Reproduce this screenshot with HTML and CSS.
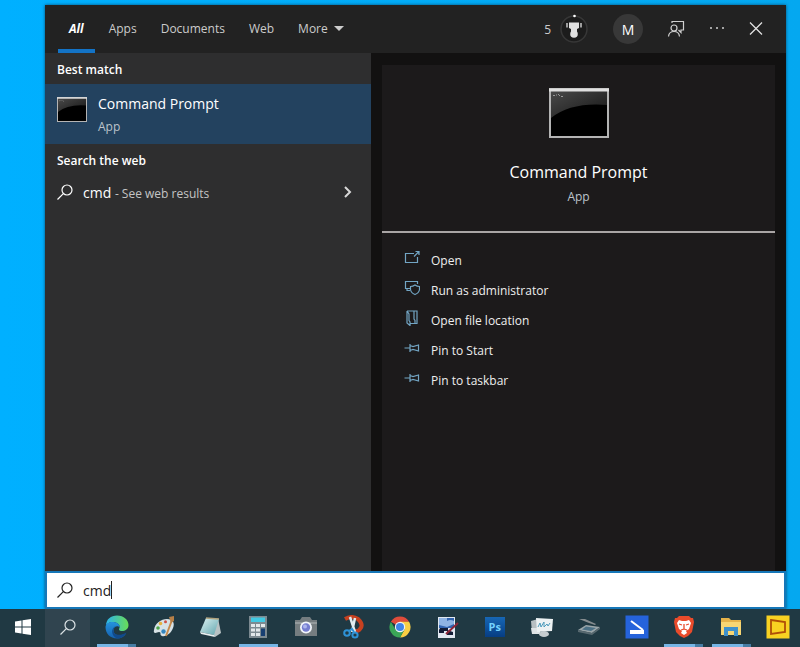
FILE: index.html
```html
<!DOCTYPE html>
<html lang="en">
<head>
  <meta charset="UTF-8" />
  <meta name="viewport" content="width=device-width, initial-scale=1" />
  <title>Search</title>
  <link rel="stylesheet" href="styles.css">
</head>
<body>
  <!-- shared shapes -->
  <svg class="defs" width="0" height="0" aria-hidden="true">
    <defs>
      <linearGradient id="gloss" x1="0" y1="0" x2="1" y2="1">
        <stop offset="0" stop-color="#4a4a4a" />
        <stop offset="1" stop-color="#151515" />
      </linearGradient>
      <symbol id="cmd" viewBox="0 0 60 50">
        <rect x="1" y="1" width="58" height="48" fill="#000" stroke="#b4b4b4" stroke-width="2" />
        <path d="M2 3H58V17Q22 14 2 30Z" fill="url(#gloss)" />
        <path d="M0 2H60" stroke="#e0e0e0" stroke-width="3" />
        <path d="M4 7.500h2M7 7h1M9 6l2 2M12 8.500h2" stroke="#999" />
      </symbol>
      <symbol id="lens" viewBox="0 0 16 16">
        <circle cx="10" cy="6" r="5" fill="none" stroke="currentColor" stroke-width="1.200" />
        <path d="M6.300 9.700L0.500 15.500" stroke="currentColor" stroke-width="1.200" />
      </symbol>
      <symbol id="pin" viewBox="0 0 16 16">
        <path d="M0.500 8H6M6 4V12M6 5.500L9 6.500 14.500 5V11L9 9.500 6 10.500M14.500 4.500V11.500" fill="none" stroke="currentColor" stroke-width="1.200" />
      </symbol>
    </defs>
  </svg>

  <main class="desktop">
    <section class="search-window">
      <header class="topbar">
        <nav class="tabs">
          <a href="#" class="tab active">All</a>
          <a href="#" class="tab">Apps</a>
          <a href="#" class="tab">Documents</a>
          <a href="#" class="tab">Web</a>
          <a href="#" class="tab">More <span class="caret"></span></a>
        </nav>
        <div class="tools">
          <button class="rewards" aria-label="Rewards, 5 points">5
            <svg width="30" height="30" viewBox="0 0 30 30">
              <circle cx="15" cy="15" r="13" fill="#1c1c1c" stroke="#373737" stroke-width="1.500" />
              <circle cx="15.500" cy="2" r="1.300" fill="#fff" />
              <path d="M10 8.500H20V14L18 15V18H12V15L10 14Z" fill="#e0e0e0" />
              <path d="M8 9V13.500M22 9V13.500" stroke="#c8c8c8" stroke-width="1.500" />
              <circle cx="15" cy="20" r="3.800" fill="#e0e0e0" />
            </svg>
          </button>
          <button class="avatar">M</button>
          <button class="tool" aria-label="Feedback">
            <svg width="18" height="18" viewBox="0 0 18 18" fill="none" stroke="#d0d0d0" stroke-width="1.200">
              <path d="M5 3V1.500H16.500V10H14V12.500L11.500 10" />
              <circle cx="7" cy="8" r="3" />
              <path d="M1.500 16.500Q2 11.500 7 11.500T12.500 16.500" />
            </svg>
          </button>
          <button class="tool" aria-label="Options">
            <svg width="16" height="16" viewBox="0 0 16 16" fill="#d0d0d0">
              <circle cx="2" cy="7" r="1" /><circle cx="8" cy="7" r="1" /><circle cx="14" cy="7" r="1" />
            </svg>
          </button>
          <button class="tool" aria-label="Close">
            <svg width="14" height="14" viewBox="0 0 14 14" stroke="#e0e0e0" stroke-width="1.300">
              <path d="M1 0.500L13 12.500M13 0.500L1 12.500" />
            </svg>
          </button>
        </div>
      </header>

      <div class="content">
        <div class="results">
          <h2 class="group">Best match</h2>
          <a href="#" class="best">
            <svg class="best-icon" width="30" height="25"><use href="#cmd" /></svg>
            <span class="best-text">
              <span class="best-name">Command Prompt</span>
              <span class="kind">App</span>
            </span>
          </a>
          <h2 class="group">Search the web</h2>
          <a href="#" class="web">
            <svg width="16" height="16"><use href="#lens" /></svg>
            <span class="web-text">cmd <small>- See web results</small></span>
            <svg width="8" height="12" viewBox="0 0 8 12" fill="none" stroke="#d8d8d8" stroke-width="2">
              <path d="M1 1L6 6L1 11" />
            </svg>
          </a>
        </div>

        <div class="preview">
          <div class="card">
            <div class="hero">
              <svg width="60" height="50"><use href="#cmd" /></svg>
              <h1 class="hero-name">Command Prompt</h1>
              <span class="kind">App</span>
            </div>
            <ul class="actions">
              <li><button class="action">
                <svg width="16" height="16" viewBox="0 0 16 16" fill="none" stroke="currentColor" stroke-width="1.200">
                  <path d="M10 3.500H1.500V12.500H13.500V7M10 6.500L15 1.500M11.500 1.500H15V5" />
                </svg>Open</button></li>
              <li><button class="action">
                <svg width="16" height="16" viewBox="0 0 16 16" fill="none" stroke="currentColor" stroke-width="1.200">
                  <path d="M6 8.500H1.500V1.500H13.500V4M3 8.500V10.500H6M11 5Q13 6.500 15.500 6.500V9.500Q15 13 11 14.500Q7 13 6.500 9.500V6.500Q9 6.500 11 5Z" />
                </svg>Run as administrator</button></li>
              <li><button class="action">
                <svg width="16" height="16" viewBox="0 0 16 16" fill="none" stroke="currentColor" stroke-width="1.200">
                  <path d="M3 1H13V13.500H6M3 1V13L6 15.500V12L5 10.500V4L3 1M10 1V9L11 10.500V13.500" />
                </svg>Open file location</button></li>
              <li><button class="action"><svg width="16" height="16"><use href="#pin" /></svg>Pin to Start</button></li>
              <li><button class="action"><svg width="16" height="16"><use href="#pin" /></svg>Pin to taskbar</button></li>
            </ul>
          </div>
        </div>
      </div>

      <label class="searchbox">
        <svg width="16" height="16"><use href="#lens" /></svg>
        <input type="text" value="cmd" aria-label="Type here to search">
        <span class="cursor"></span>
      </label>
    </section>
  </main>

  <footer class="taskbar">
    <button class="task start" aria-label="Start">
      <svg width="16" height="16" viewBox="0 0 16 16" fill="#fff">
        <path d="M0 2.500L6.500 1.500V7.500H0ZM7.500 1.300L16 0V7.500H7.500ZM0 8.500H6.500V14.500L0 13.500ZM7.500 8.500H16V16L7.500 14.700Z" />
      </svg>
    </button>
    <button class="task find" aria-label="Search"><svg width="16" height="16"><use href="#lens" /></svg></button>
    <div class="apps">
      <button class="task open stacked" aria-label="Edge">
        <svg width="24" height="24" viewBox="0 0 24 24">
          <defs>
            <linearGradient id="edge-top"><stop offset="0" stop-color="#2bb3ec" /><stop offset="1" stop-color="#69dc55" /></linearGradient>
            <linearGradient id="edge-low" x2="0" y2="1"><stop offset="0" stop-color="#2493dd" /><stop offset="1" stop-color="#1560ae" /></linearGradient>
          </defs>
          <path d="M1 11C1 4 6 0.500 12 0.500C19 0.500 23.500 5 23.500 10C23.500 14 20 16 17 16C14 16 13.500 14.500 14.500 13C15.500 9 11 6.500 7 7C3.500 7.500 1.500 9 1 11Z" fill="url(#edge-top)" />
          <path d="M0.500 12C1 8 5 6.500 8.500 7C13 7.500 15 10 14.500 12.500C13 10 8.500 11.500 8.500 15.500C8.500 20 14 22 21 18.500C19 22 16 23.500 12 23.500C5 23.500 0.500 18.500 0.500 12Z" fill="url(#edge-low)" />
          <path d="M8.500 15.500C8.500 20 15 21.500 21.500 17.500C19 22 15 23.800 12 23.500C6 21 5.500 13 11 11C9 12 8.500 14 8.500 15.500Z" fill="#114a8b" />
        </svg>
      </button>
      <button class="task" aria-label="Paint">
        <svg width="24" height="24" viewBox="0 0 24 24">
          <path d="M2 15C3 8 9 4 15 4C21 4 23 8 21 13C19 19 13 22 10 21C7 20 10 17 7 17C4 18 1 19 2 15Z" fill="#d7e2e6" />
          <circle cx="6" cy="13" r="1.800" fill="#4ea549" /><circle cx="8.500" cy="8.500" r="1.800" fill="#e5b13e" />
          <circle cx="13.500" cy="6.800" r="1.500" fill="#cf5146" /><circle cx="11.500" cy="16.500" r="2.200" fill="#3385be" />
          <path d="M20 5L14 21" stroke="#c58a4c" stroke-width="2" /><path d="M17 2L22 1L22 6L19 8Z" fill="#b78048" />
        </svg>
      </button>
      <button class="task" aria-label="Notepad">
        <svg width="24" height="24" viewBox="0 0 24 24">
          <defs><linearGradient id="note" x2="1" y2="1"><stop offset="0" stop-color="#dff4f4" /><stop offset="1" stop-color="#5fa4ad" /></linearGradient></defs>
          <path d="M19 3L22 18L16 22L14 19Z" fill="#b7c2c4" />
          <path d="M7 3L20 4L15 20L1 17Z" fill="url(#note)" /><path d="M1 17L15 20L16 22L2 19Z" fill="#e8eff0" />
          <path d="M7 3L20 4" stroke="#b0a27d" stroke-width="1.500" />
        </svg>
      </button>
      <button class="task open" aria-label="Calculator">
        <svg width="24" height="24" viewBox="0 0 24 24">
          <rect x="3" y="1" width="18" height="22" fill="#7c8a91" /><rect x="5" y="2.500" width="14" height="4.500" fill="#41c9e2" />
          <path d="M5 9h4v3H5zM10 9h4v3h-4zM15 9h4v3h-4zM5 13.500h4v3H5zM10 13.500h4v3h-4zM5 18h4v3H5zM10 18h4v3h-4z" fill="#e2e8ea" />
          <path d="M15 13.500h4V21h-4z" fill="#173f71" />
        </svg>
      </button>
      <button class="task" aria-label="Camera">
        <svg width="24" height="24" viewBox="0 0 24 24">
          <path d="M1 5H6L8 2H16L18 5H23V21H1Z" fill="#757d80" /><path d="M1 7H23V9H1Z" fill="#949b9d" />
          <circle cx="12" cy="12.500" r="6" fill="#f1f5fa" /><circle cx="12" cy="12.500" r="4.200" fill="#757ed0" /><circle cx="11" cy="11.500" r="2" fill="#acb5ed" />
        </svg>
      </button>
      <button class="task" aria-label="Snipping tool">
        <svg width="24" height="24" viewBox="0 0 24 24" fill="none">
          <path d="M4 4Q11 0 17 4Q23 10 19 14Q17 17 13 16" stroke="#c74120" stroke-width="4" />
          <path d="M9 2L14 17M14 3L11 17" stroke="#e3edf0" stroke-width="2.500" />
          <circle cx="6" cy="18" r="2.800" stroke="#2e92d6" stroke-width="2" /><circle cx="14" cy="20" r="2.600" stroke="#2e92d6" stroke-width="2" />
          <path d="M8 16L11 14L13 17" stroke="#2e92d6" stroke-width="2" />
        </svg>
      </button>
      <button class="task" aria-label="Chrome">
        <svg width="22" height="22" viewBox="0 0 22 22">
          <path d="M11 11L1.900 5.750A10.500 10.500 0 0 1 20.100 5.750L11 6Z" fill="#df4c3b" />
          <path d="M11 5.750H20.100A10.500 10.500 0 0 1 11 21.500L15.550 13.600Z" fill="#f9cf44" />
          <path d="M1.900 5.750A10.500 10.500 0 0 0 11 21.500L15.550 13.600L6.450 13.600Z" fill="#3aa557" />
          <circle cx="11" cy="11" r="5.200" fill="#eef2f6" /><circle cx="11" cy="11" r="4" fill="#4184e6" />
        </svg>
      </button>
      <button class="task" aria-label="Image editor">
        <svg width="24" height="24" viewBox="0 0 24 24">
          <rect x="3" y="2" width="17" height="21" fill="#e1e8f1" /><rect x="4" y="3" width="15" height="10" fill="#3264b0" />
          <path d="M4 3H12V6Q15 4 19 6V9L12 12L4 10Z" fill="#8fb4e4" />
          <path d="M5 13H13V16H9V18H4V15ZM12 15L18 17V20H12Z" fill="#141d37" /><path d="M23 8L11 19" stroke="#8d2637" stroke-width="2" />
        </svg>
      </button>
      <button class="task" aria-label="Photoshop"><span class="ps">Ps</span></button>
      <button class="task" aria-label="Scanned notes">
        <svg width="24" height="24" viewBox="0 0 24 24">
          <path d="M1 6L8 4L9 19L2 18Z" fill="#b7bfc2" /><path d="M1 13H10V19H2Z" fill="#dfe4e6" />
          <path d="M6 3L23 4L22 16L7 17Z" fill="#edf2f3" />
          <ellipse cx="14" cy="19" rx="5" ry="3" fill="#c6cdd0" /><path d="M8 12L10 8L11 12L14 7V12L17 9L18 11L20 8" fill="none" stroke="#4c9abb" />
        </svg>
      </button>
      <button class="task" aria-label="Scanner">
        <svg width="24" height="24" viewBox="0 0 24 24">
          <path d="M2 4L8 4L19 9L18 10L12 8Z" fill="#858c8f" />
          <path d="M9 10L23 12L15 18L1 15Z" fill="#9aa5a9" />
          <path d="M9 11.500L19 13L14 16L5 14.500Z" fill="#4c7186" /><path d="M1 15L15 18L23 12V14L15 20L1 17Z" fill="#586970" />
        </svg>
      </button>
      <button class="task" aria-label="Scan">
        <svg width="24" height="24" viewBox="0 0 24 24">
          <rect x="0.500" y="0.500" width="23" height="23" fill="#2563db" />
          <path d="M6 6L18 15" stroke="#fff" stroke-width="2" /><path d="M5 15H19V19H5Z" fill="#fff" />
        </svg>
      </button>
      <button class="task open stacked" aria-label="Brave">
        <svg width="24" height="24" viewBox="0 0 24 24">
          <path d="M7 1H17L19 3H21L22 7L20 17Q17 21 12 23Q7 21 4 17L2 7L3 3H5Z" fill="#e94b2b" />
          <path d="M7 5L10 6H14L17 5L19 8L17 14L14 16L15 18L12 20L9 18L10 16L7 14L5 8Z" fill="#fff" />
          <path d="M7 9L10 10M17 9L14 10M12 9V14L9 15M12 14L15 15" fill="none" stroke="#e94b2b" stroke-width="1.300" />
        </svg>
      </button>
      <button class="task open stacked" aria-label="File Explorer">
        <svg width="24" height="24" viewBox="0 0 24 24">
          <path d="M2 3H10L12 5H22V20H2Z" fill="#e5b34a" /><path d="M2 7H22V20H2Z" fill="#f7d673" />
          <path d="M5 12H19V21H15V16H9V21H5Z" fill="#3e91cb" />
        </svg>
      </button>
      <button class="task" aria-label="Screen recorder">
        <svg width="24" height="24" viewBox="0 0 24 24">
          <rect x="0.500" y="0.500" width="23" height="23" fill="#f8d222" /><path d="M5 5L19 7V17L5 19Z" fill="none" stroke="#af4f08" stroke-width="1.800" />
        </svg>
      </button>
    </div>
  </footer>
</body>
</html>
```

FILE: styles.css
```css
* {
  box-sizing: border-box;
}
body {
  display: flex;
  flex-direction: column;
  min-height: 100vh;
  margin: 0;
  background: linear-gradient(90deg, #00b0ff, #04a8f0);
  color: #fff;
  font-family: "Open Sans", "Noto Sans", sans-serif;
  font-size: 12px;
}
a {
  color: inherit;
  text-decoration: none;
}
button {
  padding: 0;
  border: 0;
  background: none;
  color: inherit;
  font: inherit;
}
svg {
  display: block;
  flex: none;
}
.defs {
  position: absolute;
}
.desktop {
  display: flex;
  flex: 1;
  padding: 5px 14px 0 45px;
}
.search-window {
  display: flex;
  flex: 1;
  flex-direction: column;
  background: #171515;
  box-shadow: 0 0 3px #064a70;
}

/* top bar */
.topbar {
  display: flex;
  justify-content: space-between;
  height: 48px;
  padding: 0 23px 0 13px;
  background: #222;
}
.tabs {
  display: flex;
  gap: 12px;
}
.tab {
  display: flex;
  align-items: center;
  gap: 6px;
  padding: 2px 6px 0;
  border-bottom: 4px solid transparent;
  color: #ccc;
}
.tab.active {
  padding: 2px 11px 0;
  margin-right: -4px;
  border-color: #1373c6;
  color: #fff;
  font-style: italic;
  font-weight: 700;
}
.caret {
  border: 5px solid transparent;
  border-top-color: #ccc;
  border-bottom: 0;
}
.tools {
  display: flex;
  align-items: center;
  gap: 24px;
}
.rewards {
  display: flex;
  align-items: center;
  gap: 8px;
  color: #ccc;
}
.avatar {
  width: 30px;
  height: 30px;
  border-radius: 50%;
  background: #383838;
  font-size: 14px;
  font-weight: 500;
}

/* results */
.content {
  display: flex;
  flex: 1;
}
.results {
  flex: 0 0 44%;
  background: #2e2e2f;
}
.group {
  margin: 0;
  padding: 2px 12px 0;
  font-size: 12px;
  font-weight: 600;
  line-height: 29px;
}
.best {
  display: flex;
  gap: 11px;
  height: 60px;
  padding: 8px 12px;
  background: #23425f;
}
.best-icon {
  margin-top: 5px;
}
.best-text {
  display: flex;
  flex-direction: column;
  gap: 2px;
}
.best-name {
  font-size: 14px;
  line-height: 24px;
}
.kind {
  color: #bcc4cc;
  line-height: 18px;
}
.web {
  display: flex;
  align-items: center;
  gap: 10px;
  height: 34px;
  padding: 0 19px 0 12px;
}
.web-text {
  flex: 1;
  font-size: 14px;
}
.web-text small {
  color: #c4c4c4;
  font-size: 12px;
}

/* preview pane */
.preview {
  display: flex;
  flex: 1;
  padding: 12px 11px 0;
  background: #121111;
}
.card {
  flex: 1;
  background: #1c1a1b;
}
.hero {
  display: flex;
  flex-direction: column;
  align-items: center;
  height: 168px;
  padding-top: 23px;
  border-bottom: 2px solid #a9a5a5;
}
.hero-name {
  margin: 21px 0 3px;
  font-size: 16px;
  font-weight: 400;
  line-height: 26px;
}
.actions {
  margin: 0;
  padding: 12px 22px;
  list-style: none;
}
.action {
  display: flex;
  align-items: center;
  gap: 11px;
  height: 30px;
  color: #eee;
}
.action svg {
  margin-bottom: 4px;
  color: #72a5c4;
}

/* search box */
.searchbox {
  display: flex;
  align-items: center;
  gap: 10px;
  height: 38px;
  padding: 0 10px;
  border: 2px solid #1677b8;
  background: #fff;
  color: #222;
}
.searchbox input {
  field-sizing: content;
  padding: 0;
  border: 0;
  outline: 0;
  background: none;
  color: #222;
  caret-color: transparent;
  font: inherit;
  font-size: 14px;
}
.cursor {
  width: 1px;
  height: 18px;
  margin-left: -10px;
  background: #222;
}

/* taskbar */
.taskbar {
  display: flex;
  height: 38px;
  background: #203943;
}
.task {
  display: flex;
  flex: 1;
  align-items: center;
  justify-content: center;
  border-bottom: 3px solid transparent;
}
.start,
.find {
  flex: 0 0 45px;
}
.find {
  background: #30444f;
  color: #dbe2e5;
}
.apps {
  display: flex;
  flex: 1;
  margin: 0 -2px 0 3px;
}
.task.open {
  background: linear-gradient(#76b5e5, #76b5e5) center bottom / 39px 3px no-repeat border-box;
}
.task.stacked {
  background-image: linear-gradient(90deg, #76b5e5 31px, #477da4 31px);
}
.ps {
  width: 20px;
  height: 20px;
  background: linear-gradient(#1767b5, #063d83);
  color: #73d2ff;
  font-size: 11px;
  font-weight: 700;
  line-height: 20px;
}
```
